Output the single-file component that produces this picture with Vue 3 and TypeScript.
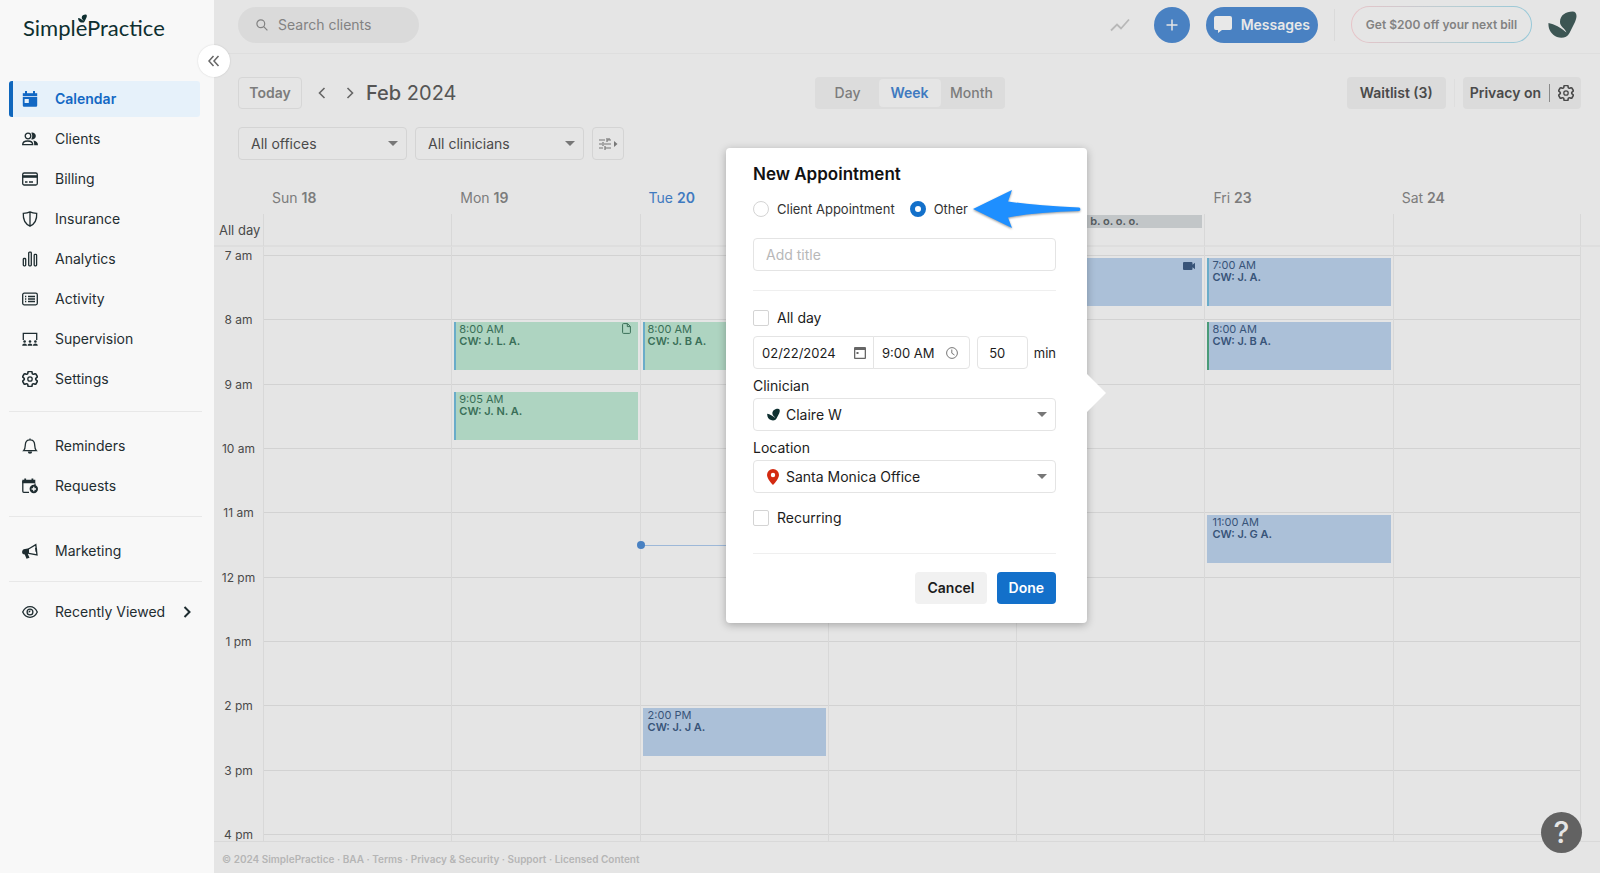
<script setup lang="ts">
import { ref } from 'vue'

interface NavItem { label: string; icon: string; active?: boolean; more?: boolean }
interface CalEvent { day: number; start: number; time: string; title: string; tone: string; edge: string; badge?: string }

const cog =
  '<path d="M9.594 3.94c.09-.542.56-.94 1.11-.94h2.593c.55 0 1.02.398 1.11.94l.213 1.281c.063.374.313.686.645.87.074.04.147.083.22.127.325.196.72.257 1.075.124l1.217-.456a1.125 1.125 0 0 1 1.37.49l1.296 2.247a1.125 1.125 0 0 1-.26 1.431l-1.003.827c-.293.241-.438.613-.43.992a7.723 7.723 0 0 1 0 .255c-.008.378.137.75.43.991l1.004.827c.424.35.534.955.26 1.43l-1.298 2.247a1.125 1.125 0 0 1-1.369.491l-1.217-.456c-.355-.133-.75-.072-1.076.124a6.47 6.47 0 0 1-.22.128c-.331.183-.581.495-.644.869l-.213 1.281c-.09.543-.56.94-1.11.94h-2.594c-.55 0-1.019-.398-1.11-.94l-.213-1.281c-.062-.374-.312-.686-.644-.87a6.52 6.52 0 0 1-.22-.127c-.325-.196-.72-.257-1.076-.124l-1.217.456a1.125 1.125 0 0 1-1.369-.49l-1.297-2.247a1.125 1.125 0 0 1 .26-1.431l1.004-.827c.292-.24.437-.613.43-.991a6.932 6.932 0 0 1 0-.255c.007-.38-.138-.751-.43-.992l-1.004-.827a1.125 1.125 0 0 1-.26-1.43l1.297-2.247a1.125 1.125 0 0 1 1.37-.491l1.216.456c.356.133.751.072 1.076-.124.072-.044.146-.086.22-.128.332-.183.582-.495.644-.869l.214-1.28Z" transform="translate(-2.1 -2.1) scale(.842)" stroke-width="1.9"/><circle cx="8" cy="8" r="2.2"/>'

const icons: Record<string, string> = {
  calendar: '<g fill="currentColor" stroke="none"><rect x="3" y="0" width="2" height="4"/><rect x="11" y="0" width="2" height="4"/><path d="M.8 2.2h14.4v3H.8z"/><path fill-rule="evenodd" d="M.8 6h14.4v8.6a1.2 1.2 0 0 1-1.2 1.2H2a1.2 1.2 0 0 1-1.2-1.2zm1.8 2v4h4.2V8z"/></g>',
  clients: '<circle cx="6" cy="5" r="2.8"/><path d="M.7 13.6c0-2.4 2.3-3.6 5-3.6s5 1.200 5 3.600z"/><path d="M9.200 1.700a3.500 3.500 0 1 1 0 6.600c1.400-1.900 1.400-4.700 0-6.600zM11.400 9.600c2.800.4 4.600 1.800 4.600 4.600h-3.800c0-2-.3-3.200-.8-4.600z" fill="currentColor" stroke="none"/>',
  billing: '<rect x=".7" y="2" width="14.600" height="12" rx="1.500"/><path d="M.7 4.200h14.600v2.600H.7z" fill="currentColor" stroke="none"/><path d="M3 11h2.500M7 11h4"/>',
  insurance: '<path d="M8 .9c2 1 4.400 1.300 6.700 1.400.3 5-1 10.300-6.700 12.900C2.300 12.600 1 7.300 1.300 2.300 3.600 2.200 6 1.900 8 .9zM8 1v14"/>',
  analytics: '<rect x="1.300" y="7.500" width="2.400" height="7.300" rx=".8"/><rect x="6.700" y="1.200" width="2.600" height="13.600" rx=".8"/><rect x="12.200" y="3.400" width="2.400" height="11.400" rx=".8"/>',
  activity: '<rect x=".7" y="2.200" width="14.600" height="11.600" rx="1.500"/><path d="M3 5.500h1.300M6 5.500h7M3 8h1.300M6 8h7M3 10.500h1.300M6 10.500h7"/>',
  supervision: '<path d="M1.300 9V2.300h13.400V9"/><g fill="currentColor" stroke="none"><circle cx="2.600" cy="10.500" r="1.300"/><circle cx="8" cy="10.500" r="1.300"/><circle cx="13.400" cy="10.500" r="1.300"/><path d="M.2 14.800c0-3 4.800-3 4.800 0zM5.600 14.800c0-3 4.800-3 4.800 0zM11 14.800c0-3 4.800-3 4.800 0z"/></g>',
  settings: cog,
  reminders: '<path d="M8 .4v1.400M1.700 12.600c1.500-1.500 1.500-3 1.600-5.600C3.400 4 5.200 1.900 8 1.900S12.600 4 12.700 7c.1 2.600.1 4.100 1.600 5.600z"/><path d="M5.800 13.600h4.400a2.200 2.200 0 0 1-4.400 0z" fill="currentColor" stroke="none"/>',
  requests: '<path d="M7 14.300H1.800a1 1 0 0 1-1-1V3M13 5.500V7"/><path d="M.3 1.800h2V.5h1.800v1.300h5.400V.5h1.800v1.300h2v3.500H.3z" fill="currentColor" stroke="none"/><circle cx="11.800" cy="11" r="4.200" fill="currentColor" stroke="none"/><path d="M11.800 8.800v4.400M9.600 11H14" stroke="#f8f8f8"/>',
  marketing: '<path d="M6.500 6 13.800 1.600 15 12 6.800 10.300"/><path d="M7 5.300v5.500L5.800 11l1.700 3.800-3 .9L2.800 11.600C.8 11.600 0 10.500.1 8.800.3 7 1.200 6.200 3 6zM13 4.800c2.600-.3 3 3.300.6 4.200z" fill="currentColor" stroke="none"/>',
  viewed: '<path d="M.7 8C2.400 4.400 4.800 2.700 8 2.700s5.600 1.700 7.300 5.300c-1.700 3.600-4.100 5.300-7.300 5.300S2.400 11.600.7 8z"/><circle cx="8" cy="8" r="2.900"/><path d="M6.600 8A1.400 1.400 0 0 0 8 6.600"/>'
}

const leaf = 'M.5 12c6 1 12 4.500 18 9.500C17 17 12 16 12 11 12 4 18 .5 24.500.5c4.500 0 5 5 2.500 10.500l-5.500 11C19 27 13.500 27.500 9 26 3 23.500 0 18 .5 12z'

const groups: NavItem[][] = [
  [
    { label: 'Calendar', icon: 'calendar', active: true },
    { label: 'Clients', icon: 'clients' },
    { label: 'Billing', icon: 'billing' },
    { label: 'Insurance', icon: 'insurance' },
    { label: 'Analytics', icon: 'analytics' },
    { label: 'Activity', icon: 'activity' },
    { label: 'Supervision', icon: 'supervision' },
    { label: 'Settings', icon: 'settings' }
  ],
  [
    { label: 'Reminders', icon: 'reminders' },
    { label: 'Requests', icon: 'requests' }
  ],
  [{ label: 'Marketing', icon: 'marketing' }],
  [{ label: 'Recently Viewed', icon: 'viewed', more: true }]
]

const days = [
  { name: 'Sun', num: 18 }, { name: 'Mon', num: 19 }, { name: 'Tue', num: 20, today: true },
  { name: 'Wed', num: 21 }, { name: 'Thu', num: 22 }, { name: 'Fri', num: 23 }, { name: 'Sat', num: 24 }
]
const hours = ['7 am', '8 am', '9 am', '10 am', '11 am', '12 pm', '1 pm', '2 pm', '3 pm']

const events: CalEvent[] = [
  { day: 1, start: 8, time: '8:00 AM', title: 'CW: J. L. A.', tone: 'green', edge: 'sky', badge: 'note' },
  { day: 1, start: 9 + 5 / 60, time: '9:05 AM', title: 'CW: J. N. A.', tone: 'green', edge: 'sky' },
  { day: 2, start: 8, time: '8:00 AM', title: 'CW: J. B A.', tone: 'green', edge: 'sky' },
  { day: 2, start: 14, time: '2:00 PM', title: 'CW: J. J A.', tone: 'blue', edge: 'none' },
  { day: 4, start: 7, time: '', title: '', tone: 'blue', edge: 'none', badge: 'video' },
  { day: 5, start: 7, time: '7:00 AM', title: 'CW: J. A.', tone: 'blue', edge: 'sky' },
  { day: 5, start: 8, time: '8:00 AM', title: 'CW: J. B A.', tone: 'blue', edge: 'leaf' },
  { day: 5, start: 11, time: '11:00 AM', title: 'CW: J. G A.', tone: 'blue', edge: 'none' }
]

const percent = (h: number) => `${((h - 7) / 9) * 100}%`
const span = `${(50 / 60 / 9) * 100}%`
const footerLinks = ['BAA', 'Terms', 'Privacy & Security', 'Support', 'Licensed Content']

const search = ref('')
const view = ref('Week')
const kind = ref('other')
const title = ref('')
const allDay = ref(false)
const recurring = ref(false)
const date = ref('02/22/2024')
const time = ref('9:00 AM')
const minutes = ref('50')
</script>

<template>
  <div class="app">
    <aside class="sidebar">
      <a class="logo" href="#">SimplePractice
        <svg class="logo-leaf" viewBox="0 0 29 27" aria-hidden="true"><path :d="leaf" /></svg>
      </a>
      <nav class="nav" aria-label="Main">
        <ul v-for="(group, g) in groups" :key="g" class="nav-group">
          <li v-for="item in group" :key="item.label">
            <a href="#" class="nav-item" :class="{ active: item.active }">
              <svg class="icon" viewBox="0 0 16 16" v-html="icons[item.icon]"></svg>
              <span class="nav-label">{{ item.label }}</span>
              <svg v-if="item.more" class="more" viewBox="0 0 8 12"><path d="M1.500 1 6.500 6l-5 5" /></svg>
            </a>
          </li>
        </ul>
      </nav>
      <button class="collapse" type="button" aria-label="Collapse menu">
        <svg viewBox="0 0 12 12"><path d="M5.500 1 1 6l4.500 5M10.500 1 6 6l4.500 5" /></svg>
      </button>
    </aside>

    <div class="main">
      <header class="topbar">
        <label class="search">
          <svg viewBox="0 0 12 12"><circle cx="4.800" cy="4.800" r="3.900" /><path d="m7.700 7.700 3.700 3.700" /></svg>
          <input v-model="search" type="text" placeholder="Search clients" aria-label="Search clients" />
        </label>
        <div class="top-actions">
          <button class="trend" type="button" aria-label="Insights"><svg viewBox="0 0 20 14"><path d="m1 12.500 6-6 4 4 8-9" /></svg></button>
          <button class="plus" type="button" aria-label="Create"><svg viewBox="0 0 12 12"><path d="M6 .5v11M.5 6h11" /></svg></button>
          <button class="messages" type="button">
            <svg viewBox="0 0 18 17"><path d="M2 0h14a2 2 0 0 1 2 2v10a2 2 0 0 1-2 2H8l-4 3v-3H2a2 2 0 0 1-2-2V2a2 2 0 0 1 2-2z" /></svg>
            Messages
          </button>
          <span class="rule"></span>
          <button class="promo" type="button">Get $200 off your next bill</button>
          <button class="avatar" type="button" aria-label="Account"><svg viewBox="0 0 29 27"><path :d="leaf" /></svg></button>
        </div>
      </header>

      <section class="toolbar">
        <div class="bar-left">
          <button class="today-btn" type="button">Today</button>
          <button class="step" type="button" aria-label="Previous week"><svg viewBox="0 0 8 12"><path d="M6.500 1 1.500 6l5 5" /></svg></button>
          <button class="step" type="button" aria-label="Next week"><svg viewBox="0 0 8 12"><path d="m1.500 1 5 5-5 5" /></svg></button>
          <h1><b>Feb</b> 2024</h1>
        </div>
        <div class="segments">
          <button v-for="v in ['Day', 'Week', 'Month']" :key="v" type="button" :class="{ on: view === v }" @click="view = v">{{ v }}</button>
        </div>
        <div class="bar-right">
          <button class="gray-btn waitlist" type="button">Waitlist (3)</button>
          <span class="rule"></span>
          <button class="gray-btn privacy" type="button">Privacy on<span class="bar"></span><svg class="icon" viewBox="0 0 16 16" v-html="icons.settings"></svg></button>
        </div>
      </section>

      <section class="filters">
        <div class="select"><select aria-label="Office"><option>All offices</option></select></div>
        <div class="select"><select aria-label="Clinician filter"><option>All clinicians</option></select></div>
        <button class="tune" type="button" aria-label="Filters">
          <svg viewBox="0 0 20 14"><path d="M1 3h6M9 3h4M9 1v4M1 7h3M6 7h7M5 5v4M1 11h4M7 11h6M7 9v4M11 1v2" /><path class="tri" d="m16 4 3.500 3L16 10z" /></svg>
        </button>
      </section>

      <section class="calendar">
        <div class="cal-row heads">
          <span></span>
          <div v-for="d in days" :key="d.num" class="day-head" :class="{ current: d.today }">{{ d.name }} <b>{{ d.num }}</b></div>
        </div>
        <div class="cal-row all-day">
          <span class="all-label">All day</span>
          <div v-for="(d, i) in days" :key="d.num" class="day-cell">
            <div v-if="i === 4" class="banner">b. o. o. o.</div>
          </div>
        </div>
        <div class="cal-row hours">
          <div class="axis">
            <span v-for="h in hours" :key="h">{{ h }}</span>
            <span class="last">4 pm</span>
          </div>
          <div class="lines"><i v-for="h in 10" :key="h"></i></div>
          <div v-for="(d, i) in days" :key="d.num" class="day-col">
            <div class="canvas">
              <div
                v-for="e in events.filter((x) => x.day === i)"
                :key="e.start"
                class="event"
                :class="[e.tone, 'edge-' + e.edge]"
                :style="{ top: percent(e.start), height: span }"
              >
                <div class="event-text"><span>{{ e.time }}</span><b>{{ e.title }}</b></div>
                <svg v-if="e.badge === 'note'" class="note" viewBox="0 0 9 11"><path d="M1.500.6h4l2.900 2.900v6a.9.9 0 0 1-.9.9h-6a.9.9 0 0 1-.9-.9v-8a.9.9 0 0 1 .9-.9zM5.300.6v3h3" /></svg>
                <svg v-if="e.badge === 'video'" class="video" viewBox="0 0 12 8"><path d="M1 0h7.500a1 1 0 0 1 1 1v1.800L12 .8v6.400l-2.500-2V7a1 1 0 0 1-1 1H1a1 1 0 0 1-1-1V1a1 1 0 0 1 1-1z" /></svg>
              </div>
              <div v-if="d.today" class="now" :style="{ top: percent(11.5) }"></div>
            </div>
          </div>
        </div>
      </section>

      <footer class="footer">
        © 2024 SimplePractice<template v-for="l in footerLinks" :key="l"> · <a href="#">{{ l }}</a></template>
      </footer>

      <form class="popover" @submit.prevent>
        <h2>New Appointment</h2>
        <div class="kinds">
          <label><input v-model="kind" type="radio" name="kind" value="client" />Client Appointment</label>
          <label><input v-model="kind" type="radio" name="kind" value="other" />Other</label>
          <svg class="pointer" viewBox="0 0 112 42" aria-hidden="true"><path d="M2 21 41 2l-4 11.500Q66 18 108 19.500a1.800 1.800 0 0 1 0 3.500Q66 24 37 29.500L41 40z" /></svg>
        </div>
        <input v-model="title" class="box title" type="text" placeholder="Add title" aria-label="Title" />
        <hr />
        <label class="check"><input v-model="allDay" type="checkbox" />All day</label>
        <div class="when">
          <label class="box date"><input v-model="date" type="text" aria-label="Date" />
            <svg viewBox="0 0 12 12"><path fill-rule="evenodd" d="M1 0h10a1 1 0 0 1 1 1v10a1 1 0 0 1-1 1H1a1 1 0 0 1-1-1V1a1 1 0 0 1 1-1zm.3 3v7.700h9.400V3zM2.500 5h2v2h-2z" /></svg>
          </label>
          <label class="box time"><input v-model="time" type="text" aria-label="Start time" />
            <svg class="clock" viewBox="0 0 12 12"><circle cx="6" cy="6" r="5.400" /><path d="M5.800 2.500V6.200L8.500 8" /></svg>
          </label>
          <label class="duration"><input v-model="minutes" class="box" type="text" aria-label="Duration in minutes" />min</label>
        </div>
        <label class="field-label" for="clinician">Clinician</label>
        <div class="select">
          <svg class="lead" viewBox="0 0 29 27"><path :d="leaf" /></svg>
          <select id="clinician"><option>Claire W</option></select>
        </div>
        <label class="field-label" for="location">Location</label>
        <div class="select">
          <svg class="lead pin" viewBox="0 0 12 16"><path fill-rule="evenodd" d="M6 0a6 6 0 0 1 6 6c0 4-6 10-6 10S0 10 0 6a6 6 0 0 1 6-6zm0 3.800a2.200 2.200 0 1 0 0 4.400 2.200 2.200 0 0 0 0-4.400z" /></svg>
          <select id="location"><option>Santa Monica Office</option></select>
        </div>
        <label class="check recurring"><input v-model="recurring" type="checkbox" />Recurring</label>
        <hr />
        <div class="buttons">
          <button class="cancel" type="button">Cancel</button>
          <button class="done" type="submit">Done</button>
        </div>
      </form>

      <button class="help" type="button" aria-label="Help">?</button>
    </div>
  </div>
</template>

<style>
body { margin: 0; }
</style>

<style scoped>
*, *::before, *::after { box-sizing: border-box; }
.app {
  display: flex;
  min-height: 100vh;
  background: #e5e5e5;
  color: #4a4a4a;
  font: 14px/20px Inter, "Liberation Sans", sans-serif;
}
button, input, select { font: inherit; color: inherit; margin: 0; }
button { padding: 0; border: 0; background: none; cursor: pointer; }
input { min-width: 0; outline: 0; }
a { color: inherit; text-decoration: none; }
svg { flex: none; fill: none; stroke: currentColor; }

/* Sidebar */
.sidebar { position: relative; flex: none; width: 214px; background: #f8f8f8; color: #1f2d31; }
.logo {
  position: relative; display: block; margin-left: 23px; height: 81px; padding-top: 12px;
  font: 22px/32px Lato, sans-serif; color: #0e2f30; white-space: nowrap;
}
.logo-leaf { position: absolute; left: 55px; top: 14px; width: 9px; height: 9px; fill: currentColor; stroke: none; }
.nav { padding: 0 14px 0 9px; }
.nav-group { display: flex; flex-direction: column; gap: 4px; margin: 0; padding: 0; list-style: none; }
.nav-group + .nav-group { margin: 12px -2px 0 0; padding: 16px 2px 0 0; border-top: 1px solid #e8e8e8; }
.nav-group:nth-child(2) { margin-top: 14px; }
.nav-group:nth-child(4) { padding-top: 12px; }
.nav-item { display: flex; align-items: center; height: 36px; padding-left: 13px; border-radius: 3px; }
.nav-item.active { padding-left: 9px; border-left: 4px solid #0f67bd; background: #e6f1fa; color: #1268c4; font-weight: 600; }
.icon { width: 16px; height: 16px; stroke-width: 1.300; }
.nav-label { flex: 1; margin-left: 17px; }
.more { width: 8px; height: 12px; margin-right: 9px; stroke-width: 2; }
.collapse {
  position: absolute; right: -16px; top: 45px; width: 32px; height: 32px; display: grid; place-items: center;
  border-radius: 50%; background: #fff; color: #666; box-shadow: 0 0 2px rgba(0, 0, 0, .15); z-index: 1;
}
.collapse svg { width: 12px; height: 12px; stroke-width: 1.500; }

/* Top bar */
.main { position: relative; flex: 1; min-width: 0; display: flex; flex-direction: column; }
.topbar { display: flex; align-items: center; justify-content: space-between; height: 54px; padding: 0 23px 4px 24px; border-bottom: 1px solid #dedede; }
.search { display: flex; align-items: center; gap: 10px; width: 181px; height: 36px; padding: 0 18px; border-radius: 18px; background: #dadada; color: #828282; }
.search svg { width: 12px; height: 12px; stroke-width: 1.200; }
.search input { width: 100%; border: 0; padding: 0; background: none; }
.search input::placeholder { color: #828282; opacity: 1; }
.top-actions { display: flex; align-items: center; gap: 16px; }
.trend { color: #b8b8b8; margin-right: 8px; }
.trend svg { display: block; width: 20px; height: 14px; stroke-width: 1.800; }
.plus { display: grid; place-items: center; width: 36px; height: 36px; border-radius: 50%; background: #4981c2; color: #e5e5e5; }
.plus svg { width: 12px; height: 12px; stroke-width: 1.500; }
.messages { display: flex; align-items: center; gap: 9px; height: 36px; padding: 0 8px; border-radius: 18px; background: #4981c2; color: #e8e8e8; font-weight: 600; }
.messages svg { width: 18px; height: 17px; fill: currentColor; stroke: none; }
.rule { width: 1px; height: 32px; background: #dadada; }
.promo {
  width: 181px; height: 37px; border: 1px solid transparent; border-radius: 19px; color: #828282; font-size: 12px; font-weight: 600; white-space: nowrap;
  background: linear-gradient(#e5e5e5, #e5e5e5) padding-box, linear-gradient(90deg, #e8c4c8, #b9cdd2 55%, #96c8d8) border-box;
}
.avatar svg { display: block; width: 29px; height: 27px; fill: #3c5553; stroke: none; }

/* Toolbar */
.toolbar { display: grid; grid-template-columns: 1fr auto 1fr; align-items: center; padding: 23px 19px 0 24px; }
.bar-left { display: flex; align-items: center; }
.today-btn { height: 32px; width: 64px; border: 1px solid #d6d6d6; border-radius: 4px; color: #7c7c7c; font-weight: 600; }
.step { margin-left: 16px; color: #666; }
.step + .step { margin-left: 20px; }
.step svg { display: block; width: 8px; height: 12px; stroke-width: 1.600; }
h1 { margin: 0 0 0 12px; font-size: 20px; line-height: 24px; font-weight: 400; color: #555; }
h1 b { font-weight: 500; }
.segments { display: flex; height: 32px; padding: 2px; border-radius: 4px; background: #dcdcdc; color: #7c7c7c; }
.segments button { min-width: 62px; border-radius: 4px; font-weight: 500; }
.segments .on { background: #e5e5e5; color: #3f7ac0; font-weight: 600; }
.bar-right { display: flex; align-items: center; justify-content: flex-end; gap: 8px; }
.bar-right .rule { height: 28px; background: #dedede; }
.gray-btn { display: flex; align-items: center; justify-content: center; height: 32px; border-radius: 4px; background: #dbdbdb; font-weight: 600; }
.waitlist { width: 99px; }
.privacy { padding: 0 7px; gap: 8px; }
.privacy .bar { width: 1px; height: 18px; background: #8a8a8a; }

/* Filters and selects */
.filters { display: flex; gap: 8px; padding: 18px 24px 0; }
.select { position: relative; display: flex; align-items: center; height: 33px; border: 1px solid #d4d4d4; border-radius: 4px; }
.filters .select { width: 169px; }
.select select { flex: 1; height: 100%; padding: 0 28px 0 12px; border: 0; outline: 0; appearance: none; background: none; }
.select::after { content: ""; position: absolute; right: 8px; top: 13px; border: 5px solid transparent; border-top-color: #777; border-bottom: 0; pointer-events: none; }
.tune { display: grid; place-items: center; width: 32px; height: 33px; border: 1px solid #d4d4d4; border-radius: 4px; color: #777; }
.tune svg { width: 20px; height: 14px; stroke-width: 1.200; }
.tri { fill: currentColor; stroke: none; }

/* Calendar */
.calendar { flex: 1; display: flex; flex-direction: column; padding-right: 19px; }
.cal-row { display: grid; grid-template-columns: 49px repeat(7, minmax(0, 1fr)); }
.heads { padding: 28px 0 6px; color: #7c7c7c; }
.day-head { padding-left: 9px; }
.day-head b { font-weight: 600; }
.day-head.current { color: #3f7ac0; }
.all-day { height: 33px; margin-right: -19px; padding-right: 19px; border-bottom: 2px solid #dedede; }
.all-label { padding-left: 5px; font-size: 13px; line-height: 32px; white-space: nowrap; }
.day-cell, .day-col { border-left: 1px solid #d8d8d8; }
.day-cell:last-child, .day-col:last-child { border-right: 1px solid #d8d8d8; }
.banner { height: 13px; margin: 1px 2px 0; padding-left: 71px; background: #c2c6c8; color: #555c60; font-size: 11px; line-height: 12px; font-weight: 600; }
.hours { flex: 1; }
.axis, .lines { display: grid; grid-template-rows: repeat(9, minmax(48px, 1fr)) 0; padding: 8px 0 7px; }
.axis { grid-column: 1; grid-row: 1; text-align: center; font-size: 12px; line-height: 18px; }
.axis span { margin-top: -8px; }
.lines { grid-column: 2 / -1; grid-row: 1; }
.lines i { height: 1px; background: #d2d2d2; }
.day-col { grid-row: 1; padding: 8px 0 7px; }
.canvas { position: relative; height: 100%; }
.event {
  position: absolute; left: 2px; right: 2px; display: flex; justify-content: space-between; align-items: flex-start;
  border: solid transparent; border-width: 3px 0; background-clip: padding-box; font-size: 11px; line-height: 12px;
}
.event-text { display: flex; flex-direction: column; align-self: stretch; padding: 1px 0 0 3px; border-left: 2px solid transparent; }
.event b { font-weight: 600; }
.green { background-color: #aed4c1; color: #3a6f58; }
.blue { background-color: #abc0d8; color: #385478; }
.edge-sky .event-text { border-color: #69acc9; }
.edge-leaf .event-text { border-color: #499b78; }
.note { width: 9px; height: 11px; margin: 1px 7px 0 0; }
.video { width: 12px; height: 8px; margin: 4px 7px 0 0; fill: currentColor; stroke: none; }
.now { position: absolute; left: -1px; right: 0; height: 1px; background: #9db8d8; }
.now::before { content: ""; position: absolute; left: -3px; top: -4px; width: 8px; height: 8px; border-radius: 50%; background: #4981c2; }
.day-col:nth-child(3) { grid-column: 2; }
.day-col:nth-child(4) { grid-column: 3; }
.day-col:nth-child(5) { grid-column: 4; }
.day-col:nth-child(6) { grid-column: 5; }
.day-col:nth-child(7) { grid-column: 6; }
.day-col:nth-child(8) { grid-column: 7; }
.day-col:nth-child(9) { grid-column: 8; }

.footer { padding: 9px 8px 6px; border-top: 1px solid #d9d9d9; color: #b5b5b5; font-size: 10px; line-height: 16px; font-weight: 600; }
.help {
  position: absolute; right: 18px; bottom: 20px; width: 41px; height: 41px; border-radius: 50%;
  background: #626262; color: #e5e5e5; font-size: 30px; line-height: 41px; font-weight: 500; text-align: center;
}

/* Appointment popover */
.popover {
  position: absolute; left: 512px; top: 148px; width: 361px; padding: 14px 31px 19px 27px;
  border-radius: 4px; background: #fff; color: #1c1c1c; box-shadow: 0 2px 8px rgba(0, 0, 0, .28);
}
.popover::after {
  content: ""; position: absolute; left: 100%; top: 226px; width: 19px; height: 38px; background: #fff;
  clip-path: polygon(0 0, 100% 50%, 0 100%);
}
h2 { margin: 0; font-size: 17px; line-height: 24px; font-weight: 600; color: #111; }
.kinds { position: relative; display: flex; gap: 15px; margin-top: 13px; }
.kinds label, .check { display: flex; align-items: center; gap: 8px; }
.kinds label { color: #333; font-size: 13px; white-space: nowrap; }
input[type="radio"], input[type="checkbox"] { appearance: none; flex: none; width: 16px; height: 16px; border: 1px solid #d4d4d4; background: #fff; }
input[type="radio"] { border-radius: 50%; }
input[type="radio"]:checked { border: 5px solid #1370ca; }
input[type="checkbox"] { border-radius: 2px; }
input[type="checkbox"]:checked { background: #1370ca; }
.pointer { position: absolute; left: 218px; top: -11px; width: 112px; height: 42px; fill: #1e8fff; stroke: none; filter: drop-shadow(0 1px 1px rgba(0, 0, 0, .4)); }
.box { height: 33px; border: 1px solid #e4e4e4; border-radius: 4px; background: #fff; }
.title { display: block; width: 100%; margin-top: 19px; padding: 0 12px; }
.title::placeholder { color: #b8b8b8; opacity: 1; }
hr { height: 1px; margin: 19px 0 0; border: 0; background: #efefef; }
.check { margin-top: 17px; }
.when { display: flex; margin-top: 8px; font-size: 13px; }
.when .date, .when .time { display: flex; align-items: center; }
.when .date input, .when .time input { flex: 1; width: 0; border: 0; padding: 0; background: none; }
.date { width: 121px; padding: 0 7px 0 8px; border-radius: 4px 0 0 4px; }
.time { width: 97px; margin-left: -1px; padding: 0 11px 0 8px; border-radius: 0 4px 4px 0; }
.when svg { width: 12px; height: 12px; fill: #666; stroke: none; }
.when .clock { fill: none; stroke: #777; }
.duration { display: flex; align-items: center; gap: 6px; margin-left: auto; }
.duration input { width: 51px; text-align: center; padding: 0 10px 0 0; }
.field-label { display: block; margin: 7px 0 2px; }
.popover .select { border-color: #e4e4e4; }
.popover select { padding-left: 6px; }
.lead { width: 13px; height: 13px; margin-left: 13px; fill: #0e2f30; stroke: none; }
.pin { width: 12px; height: 16px; margin-right: 1px; fill: #d32a11; }
.recurring { margin-top: 15px; }
.recurring + hr { margin-top: 25px; }
.buttons { display: flex; justify-content: flex-end; gap: 10px; margin-top: 18px; font-weight: 600; }
.buttons button { height: 32px; padding: 0 12px; border-radius: 4px; }
.cancel { background: #f1f1f1; }
.done { background: #1370ca; color: #fff; }
</style>
